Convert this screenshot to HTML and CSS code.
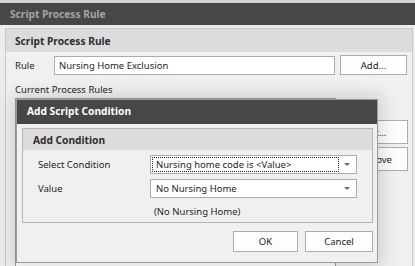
FILE: index.html
```
<!DOCTYPE html>
<html>
<head>
<meta charset="utf-8">
<link rel="stylesheet" href="styles.css">
</head>
<body>
<div class="window">
  <div class="top-strip"></div>
  <div class="titlebar">Script Process Rule</div>
  <div class="content">
    <div class="panel">
      <div class="panel-header">Script Process Rule</div>
      <div class="panel-body">
        <div class="rule-row">
          <span class="rule-label">Rule</span>
          <div class="textbox">Nursing Home Exclusion</div>
          <div class="btn btn-side">Add...</div>
        </div>
        <div class="section-label">Current Process Rules</div>
        <div class="list-row">
          <div class="listbox"></div>
          <div class="side-buttons">
            <div class="btn btn-tall">Edit...</div>
            <div class="btn btn-tall">Remove</div>
          </div>
        </div>
      </div>
    </div>
  </div>

  <div class="dialog">
    <div class="dialog-title">Add Script Condition</div>
    <div class="dialog-body">
      <div class="group">
        <div class="group-header">Add Condition</div>
        <div class="group-body">
          <div class="field-row">
            <span class="field-label">Select Condition</span>
            <div class="combo">
              <span class="combo-text focused">Nursing home code is &lt;Value&gt;</span>
              <span class="combo-arrow"><svg width="6" height="3" viewBox="0 0 6 3"><path d="M0 0H6L3 3Z" fill="#6a6a6a"/></svg></span>
            </div>
          </div>
          <div class="field-row">
            <span class="field-label">Value</span>
            <div class="combo">
              <span class="combo-text">No Nursing Home</span>
              <span class="combo-arrow"><svg width="6" height="3" viewBox="0 0 6 3"><path d="M0 0H6L3 3Z" fill="#6a6a6a"/></svg></span>
            </div>
          </div>
          <div class="value-note">(No Nursing Home)</div>
        </div>
      </div>
      <div class="dialog-buttons">
        <div class="btn btn-ok">OK</div>
        <div class="btn btn-cancel">Cancel</div>
      </div>
    </div>
  </div>
</div>
</body>
</html>
```
FILE: styles.css
```
* { box-sizing: border-box; }
html, body {
  margin: 0;
  padding: 0;
  width: 415px;
  height: 266px;
  overflow: hidden;
  background: #f0f0f0;
}
body {
  font-family: "Noto Sans", "Open Sans", sans-serif;
  font-size: 9.5px;
  color: #1e1e1e;
}
.window {
  position: relative;
  width: 415px;
  height: 266px;
  display: flex;
  flex-direction: column;
  background: #ececec;
}
.top-strip {
  height: 3px;
  background: #d4d4d4;
}
.titlebar {
  height: 22px;
  background: #474747;
  color: #a3a5a8;
  font-weight: bold;
  font-size: 10.2px;
  padding-left: 10px;
  line-height: 22px;
}
.content {
  flex: 1;
  padding: 3px 3px 0 5px;
  display: flex;
}
.panel {
  flex: 1;
  border: 1px solid #c8c8c8;
  border-bottom: none;
  background: #f0f0f0;
  display: flex;
  flex-direction: column;
}
.panel-header {
  height: 23px;
  background: #dcdcdc;
  font-weight: bold;
  color: #2e2e2e;
  font-size: 10.2px;
  padding-left: 9px;
  line-height: 24px;
}
.panel-body {
  flex: 1;
  padding: 3px 4px 0 9px;
  display: flex;
  flex-direction: column;
}
.rule-row {
  display: flex;
  align-items: center;
  height: 20px;
}
.rule-label {
  width: 39px;
}
.textbox {
  width: 281px;
  height: 19px;
  border: 1px solid #acacac;
  background: #fff;
  padding-left: 4px;
  line-height: 17px;
}
.btn {
  background: #fdfdfd;
  border: 1px solid #adadad;
  display: flex;
  align-items: center;
  justify-content: center;
  color: #222;
}
.btn-side {
  width: 67px;
  height: 20px;
  margin-left: 5px;
}
.section-label {
  margin-top: 7px;
  height: 16px;
  line-height: 16px;
}
.list-row {
  flex: 1;
  display: flex;
  margin-top: 0;
}
.listbox {
  width: 321px;
  border: 1px solid #9c9c9c;
  border-bottom: none;
  background: #fff;
}
.side-buttons {
  margin-left: 4px;
  padding-top: 22px;
  display: flex;
  flex-direction: column;
  gap: 3px;
}
.btn-tall {
  width: 68px;
  height: 24px;
}

/* dialog overlay */
.dialog {
  position: absolute;
  left: 16px;
  top: 99px;
  width: 362px;
  height: 164px;
  border: 1px solid #9a9a9a;
  background: #f0f0f0;
  box-shadow: 0 0 16px 4px rgba(0, 0, 0, 0.14);
  display: flex;
  flex-direction: column;
}
.dialog-title {
  height: 24px;
  background: #474747;
  color: #ffffff;
  font-weight: bold;
  font-size: 10.2px;
  padding-left: 10px;
  line-height: 23px;
}
.dialog-body {
  flex: 1;
  padding: 4px 4px 0 5px;
  display: flex;
  flex-direction: column;
}
.group {
  border: 1px solid #b4b4b4;
  height: 95px;
  display: flex;
  flex-direction: column;
}
.group-header {
  height: 21px;
  background: #dcdcdc;
  font-weight: bold;
  color: #2e2e2e;
  font-size: 10.2px;
  padding-left: 10px;
  line-height: 22px;
}
.group-body {
  padding: 5px 0 0 15px;
  display: flex;
  flex-direction: column;
  gap: 5px;
}
.field-row {
  display: flex;
  align-items: center;
}
.field-label {
  width: 112px;
}
.combo {
  width: 207px;
  height: 19px;
  border: 1px solid #acacac;
  background: #fff;
  display: flex;
  align-items: center;
  padding: 1px;
}
.combo-text {
  flex: 1;
  height: 15px;
  line-height: 14px;
  padding-left: 3px;
  border: 1px solid transparent;
}
.combo-text.focused {
  border: 1px dotted #222;
}
.combo-arrow {
  width: 16px;
  display: flex;
  justify-content: center;
  align-items: center;
}
.value-note {
  padding-left: 4px;
  margin-left: 112px;
  height: 16px;
  line-height: 16px;
  margin-top: 1px;
}
.dialog-buttons {
  display: flex;
  justify-content: flex-end;
  gap: 7px;
  margin-top: 8px;
}
.btn-ok {
  width: 65px;
  height: 21px;
}
.btn-cancel {
  width: 68px;
  height: 21px;
}
```
